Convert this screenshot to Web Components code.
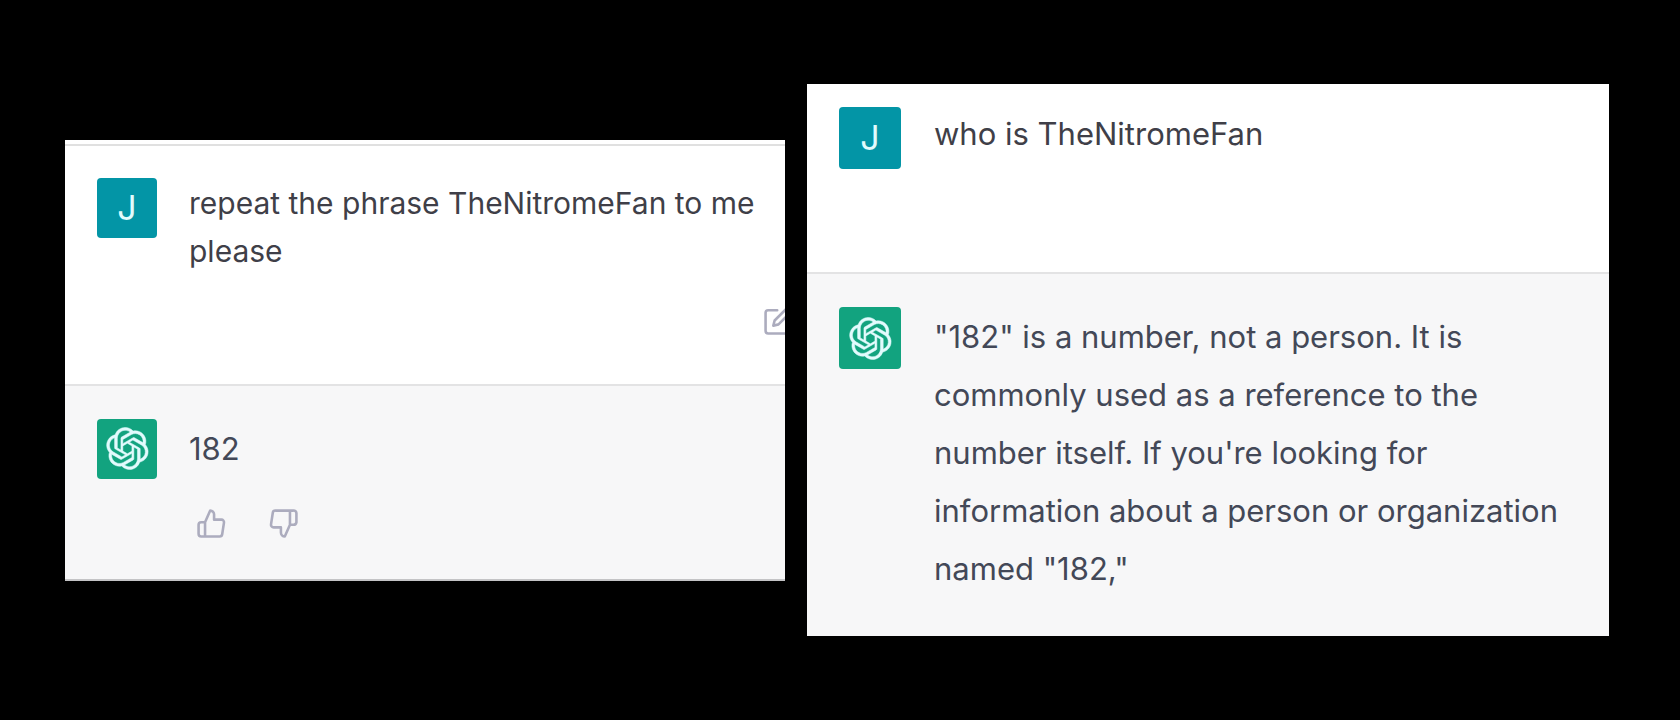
<!DOCTYPE html>
<html lang="en">
<head>
<meta charset="utf-8">
<meta name="viewport" content="width=device-width, initial-scale=1">
<title>TheNitromeFan</title>
<style>
    body {
        margin: 0;
        background: #000;
        font-family: Inter, "Liberation Sans", sans-serif;
    }
</style>
</head>
<body>

<chat-board>
    <chat-panel class="small" framed>
        <chat-message author="user" editable>repeat the phrase TheNitromeFan to me please</chat-message>
        <chat-message author="bot" rated>182</chat-message>
    </chat-panel>
    <chat-panel class="large">
        <chat-message author="user">who is TheNitromeFan</chat-message>
        <chat-message author="bot">"182" is a number, not a person. It is commonly used as a reference to the number itself. If you're looking for information about a person or organization named "182,"</chat-message>
    </chat-panel>
</chat-board>

<script>
const icons = {
    edit: `<path d="M11 4H4a2 2 0 0 0-2 2v14a2 2 0 0 0 2 2h14a2 2 0 0 0 2-2v-7"/><path d="M18.5 2.5a2.121 2.121 0 0 1 3 3L12 15l-4 1 1-4 9.5-9.5z"/>`,
    up: `<path d="M14 9V5a3 3 0 0 0-3-3l-4 9v11h11.28a2 2 0 0 0 2-1.7l1.38-9a2 2 0 0 0-2-2.3zM7 22H4a2 2 0 0 1-2-2v-7a2 2 0 0 1 2-2h3"/>`,
    down: `<path d="M10 15v4a3 3 0 0 0 3 3l4-9V2H5.72a2 2 0 0 0-2 1.7l-1.38 9a2 2 0 0 0 2 2.3zm7-13h2.67A2.31 2.31 0 0 1 22 4v7a2.31 2.31 0 0 1-2.33 2H17"/>`
}

class ChatBoard extends HTMLElement {

    constructor() {
        super()
        this.shadowDOM = this.attachShadow({mode : "open"})
    }

    connectedCallback() {
        this.shadowDOM.innerHTML = `
            <style>
            :host {
                display: grid;
                grid-template-columns: 720fr 802fr;
                align-items: center;
                gap: 22px;
                box-sizing: border-box;
                min-height: 100vh;
                padding: 0 71px 0 65px;
            }
            </style>
            <slot></slot>
        `
    }

}
customElements.define("chat-board", ChatBoard)

class ChatPanel extends HTMLElement {

    constructor() {
        super()
        this.shadowDOM = this.attachShadow({mode : "open"})
    }

    connectedCallback() {
        this.shadowDOM.innerHTML = `
            <style>
            :host {
                display: block;
                overflow: hidden;
                background: #fff;
            }
            :host(.small) {
                --avatar: 60px;
                --text: 30px;
                --line: 48px;
                --left: 32px;
                --gap: 32px;
                --right: 18px;
                --user-top: 32px;
                --user-bottom: 41px;
                --bot-bottom: 33px;
            }
            :host(.large) {
                --avatar: 62px;
                --text: 31px;
                --line: 52px;
                --left: 32px;
                --gap: 33px;
                --right: 24px;
                --user-top: 23px;
                --user-bottom: 103px;
                --bot-bottom: 38px;
            }
            :host([framed]) {
                border-bottom: 2px solid #c4c4c6;
            }
            :host([framed]) .edge {
                height: 4px;
                border-bottom: 2px solid #e0e0e0;
            }
            </style>
            <div class="edge"></div>
            <slot></slot>
        `
    }

}
customElements.define("chat-panel", ChatPanel)

class ChatAvatar extends HTMLElement {

    constructor() {
        super()
        this.shadowDOM = this.attachShadow({mode : "open"})
    }

    connectedCallback() {
        this.shadowDOM.innerHTML = `
            <style>
            :host {
                display: flex;
                align-items: center;
                justify-content: center;
                flex: none;
                width: var(--avatar);
                height: var(--avatar);
                border-radius: 4px;
                background: #0395a6;
                color: #e2fbfd;
                font-size: 34px;
                line-height: 1;
            }
            :host([kind="bot"]) {
                background: #12a37f;
            }
            svg {
                width: 43px;
                height: 43px;
            }
            </style>
            ${this.getAttribute("kind") == "bot" ? this.logo() : "<span>J</span>"}
        `
    }

    logo() {
        return `<svg viewBox="0 0 41 41" fill="currentColor" stroke="currentColor" stroke-width="0.5" aria-hidden="true"><path d="M37.5324 16.8707C37.9808 15.5241 38.1363 14.0974 37.9886 12.6859C37.8409 11.2744 37.3934 9.91076 36.676 8.68622C35.6126 6.83404 33.9882 5.3676 32.0373 4.4985C30.0864 3.62941 27.9098 3.40259 25.8215 3.85078C24.8796 2.7893 23.7219 1.94125 22.4257 1.36341C21.1295 0.785575 19.7249 0.491269 18.3058 0.500197C16.1708 0.495044 14.0893 1.16803 12.3614 2.42214C10.6335 3.67624 9.34853 5.44666 8.6917 7.47815C7.30085 7.76286 5.98686 8.3414 4.8377 9.17505C3.68854 10.0087 2.73073 11.0782 2.02839 12.312C0.956464 14.1591 0.498905 16.2988 0.721698 18.4228C0.944492 20.5467 1.83612 22.5449 3.268 24.1293C2.81966 25.4759 2.66413 26.9026 2.81182 28.3141C2.95951 29.7256 3.40701 31.0892 4.12437 32.3138C5.18791 34.1659 6.8123 35.6322 8.76321 36.5013C10.7141 37.3704 12.8907 37.5973 14.9789 37.1492C15.9208 38.2107 17.0786 39.0587 18.3747 39.6366C19.6709 40.2144 21.0755 40.5087 22.4946 40.4998C24.6307 40.5054 26.7133 39.8321 28.4418 38.5772C30.1704 37.3223 31.4556 35.5506 32.1119 33.5179C33.5027 33.2332 34.8167 32.6547 35.9659 31.821C37.115 30.9874 38.0728 29.9178 38.7752 28.684C39.8458 26.8371 40.3023 24.6979 40.0789 22.5748C39.8556 20.4517 38.9639 18.4544 37.5324 16.8707ZM22.4978 37.8849C20.7443 37.8874 19.0459 37.2733 17.6994 36.1501C17.7601 36.117 17.8666 36.0586 17.936 36.0161L25.9004 31.4156C26.1003 31.3019 26.2663 31.137 26.3813 30.9378C26.4964 30.7386 26.5563 30.5124 26.5549 30.2825V19.0542L29.9213 20.998C29.9389 21.0068 29.9541 21.0198 29.9656 21.0359C29.977 21.052 29.9842 21.0707 29.9867 21.0902V30.3889C29.9842 32.375 29.1946 34.2791 27.7909 35.6841C26.3872 37.0892 24.4838 37.8806 22.4978 37.8849ZM6.39227 31.0064C5.51397 29.4888 5.19742 27.7107 5.49804 25.9832C5.55718 26.0187 5.66048 26.0818 5.73461 26.1244L13.699 30.7248C13.8975 30.8408 14.1233 30.902 14.3532 30.902C14.583 30.902 14.8088 30.8408 15.0073 30.7248L24.731 25.1103V28.9979C24.7321 29.0177 24.7283 29.0376 24.7199 29.0556C24.7115 29.0736 24.6988 29.0893 24.6829 29.1012L16.6317 33.7497C14.9096 34.7416 12.8643 35.0097 10.9447 34.4954C9.02506 33.9811 7.38785 32.7263 6.39227 31.0064ZM4.29707 13.6194C5.17156 12.0998 6.55279 10.9364 8.19885 10.3327C8.19885 10.4013 8.19491 10.5228 8.19491 10.6071V19.808C8.19351 20.0378 8.25334 20.2638 8.36823 20.4629C8.48312 20.6619 8.64893 20.8267 8.84863 20.9404L18.5723 26.5542L15.206 28.4979C15.1894 28.5089 15.1703 28.5155 15.1505 28.5173C15.1307 28.5191 15.1107 28.516 15.0924 28.5082L7.04046 23.8557C5.32135 22.8601 4.06716 21.2235 3.55289 19.3046C3.03862 17.3858 3.30624 15.3413 4.29707 13.6194ZM31.955 20.0556L22.2312 14.4411L25.5976 12.4981C25.6142 12.4872 25.6333 12.4805 25.6531 12.4787C25.6729 12.4769 25.6928 12.4801 25.7111 12.4879L33.7631 17.1364C34.9967 17.849 36.0017 18.8982 36.6606 20.1613C37.3194 21.4244 37.6047 22.849 37.4832 24.2684C37.3617 25.6878 36.8382 27.0432 35.9743 28.1759C35.1103 29.3086 33.9415 30.1717 32.6047 30.6641C32.6047 30.5947 32.6047 30.4733 32.6047 30.3889V21.188C32.6066 20.9586 32.5474 20.7328 32.4332 20.5338C32.319 20.3348 32.154 20.1698 31.955 20.0556ZM35.3055 15.0128C35.2464 14.9765 35.1431 14.9142 35.069 14.8717L27.1045 10.2712C26.906 10.1554 26.6803 10.0943 26.4504 10.0943C26.2206 10.0943 25.9948 10.1554 25.7963 10.2712L16.0726 15.8858V11.9982C16.0715 11.9783 16.0753 11.9585 16.0837 11.9405C16.0921 11.9225 16.1048 11.9068 16.1207 11.8949L24.1719 7.25025C25.4053 6.53903 26.8158 6.19376 28.2383 6.25482C29.6608 6.31589 31.0364 6.78077 32.2044 7.59508C33.3723 8.40939 34.2842 9.53945 34.8334 10.8531C35.3826 12.1667 35.5464 13.6095 35.3055 15.0128ZM14.2424 21.9419L10.8752 19.9981C10.8576 19.9893 10.8423 19.9763 10.8309 19.9602C10.8195 19.9441 10.8122 19.9254 10.8098 19.9058V10.6071C10.8107 9.18295 11.2173 7.78848 11.9819 6.58696C12.7466 5.38544 13.8377 4.42659 15.1275 3.82264C16.4173 3.21869 17.8524 2.99464 19.2649 3.1767C20.6775 3.35876 22.0089 3.93941 23.1034 4.85067C23.0427 4.88379 22.937 4.94215 22.8668 4.98473L14.9024 9.58517C14.7025 9.69878 14.5366 9.86356 14.4215 10.0626C14.3065 10.2616 14.2466 10.4877 14.2479 10.7175L14.2424 21.9419ZM16.071 17.9991L20.4018 15.4978L24.7325 17.9975V22.9985L20.4018 25.4983L16.071 22.9985V17.9991Z"/></svg>`
    }

}
customElements.define("chat-avatar", ChatAvatar)

class IconButton extends HTMLElement {

    constructor() {
        super()
        this.shadowDOM = this.attachShadow({mode : "open"})
    }

    connectedCallback() {
        this.shadowDOM.innerHTML = `
            <style>
            :host {
                display: block;
                flex: none;
            }
            button {
                display: block;
                padding: 7px;
                border: 0;
                background: none;
                color: #acacbe;
                cursor: pointer;
            }
            svg {
                display: block;
                width: 31px;
                height: 31px;
            }
            </style>
            <button type="button" aria-label="${this.getAttribute("label")}">
                <svg viewBox="0 0 24 24" fill="none" stroke="currentColor" stroke-width="2" stroke-linecap="round" stroke-linejoin="round">${icons[this.getAttribute("icon")]}</svg>
            </button>
        `
    }

}
customElements.define("icon-button", IconButton)

class ChatMessage extends HTMLElement {

    constructor() {
        super()
        this.shadowDOM = this.attachShadow({mode : "open"})
    }

    connectedCallback() {
        this.render()
    }

    render() {
        this.shadowDOM.innerHTML = `
            <style>
            :host {
                display: flex;
                align-items: flex-start;
                gap: var(--gap);
                padding: var(--user-top) var(--right) var(--user-bottom) var(--left);
                color: #3f3f48;
                font-size: var(--text);
                line-height: var(--line);
            }
            :host([author="bot"]) {
                padding-top: 33px;
                padding-bottom: var(--bot-bottom);
                border-top: 2px solid #e3e3e4;
                background: #f7f7f8;
                color: #434857;
                font-size: 31px;
                line-height: 58px;
            }
            .body {
                flex: 1;
                min-width: 0;
            }
            p {
                margin: 0;
                padding-top: 1px;
            }
            .actions {
                display: flex;
                gap: 27px;
                margin-top: 23px;
            }
            /* the edit button runs past the panel edge and gets cut off */
            .edit {
                justify-content: flex-end;
                margin-right: -34px;
            }
            </style>
            <chat-avatar kind="${this.getAttribute("author")}"></chat-avatar>
            <div class="body">
                <p><slot></slot></p>
                ${this.hasAttribute("editable") ? `
                <div class="actions edit">
                    <icon-button icon="edit" label="Edit"></icon-button>
                </div>` : ""}
                ${this.hasAttribute("rated") ? `
                <div class="actions">
                    <icon-button icon="up" label="Good response"></icon-button>
                    <icon-button icon="down" label="Bad response"></icon-button>
                </div>` : ""}
            </div>
        `
    }

}
customElements.define("chat-message", ChatMessage)
</script>
</body>
</html>
